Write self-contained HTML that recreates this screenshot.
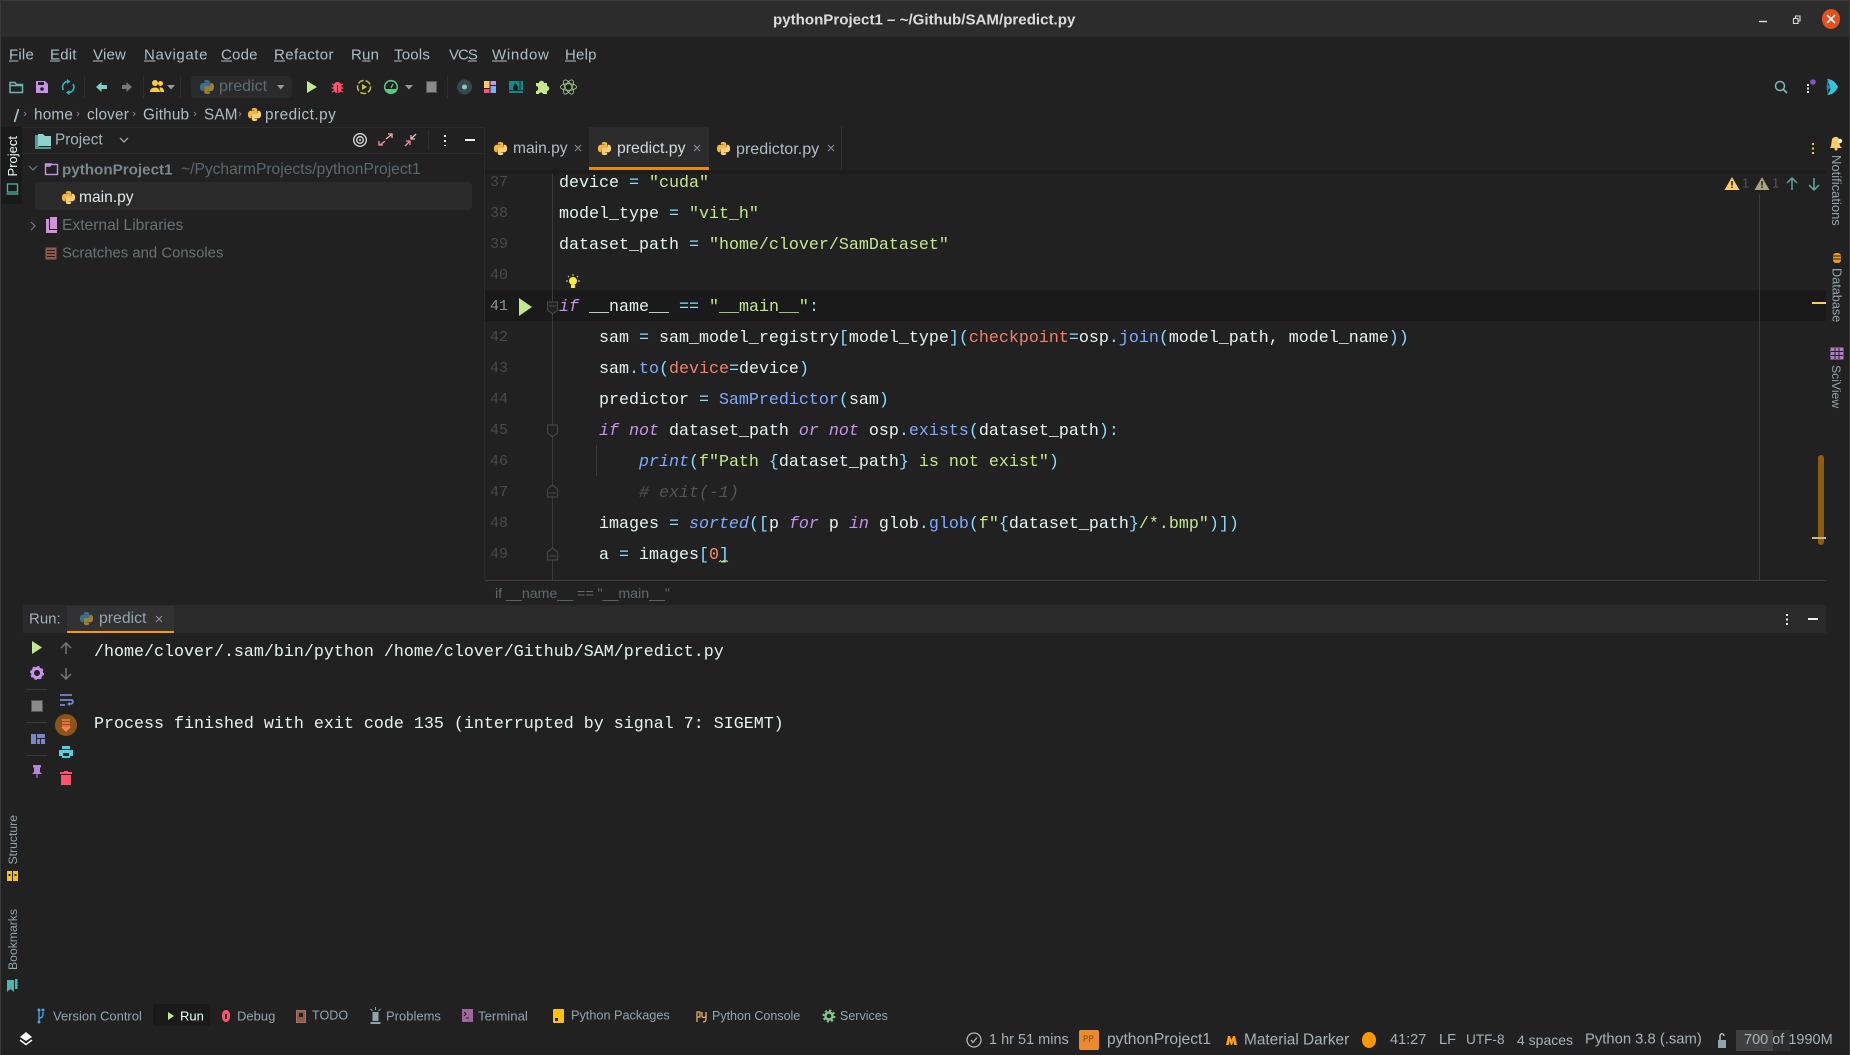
<!DOCTYPE html>
<html><head><meta charset="utf-8"><title>pythonProject1</title>
<style>
html,body{margin:0;padding:0;background:#212121;width:1850px;height:1055px;overflow:hidden}
body{position:relative;font-family:"Liberation Sans",sans-serif;color:#b0bec5;font-size:15px}
.t{position:absolute;white-space:pre;line-height:1;transform:translateY(-50%)}
.b{position:absolute}
.v{position:absolute;white-space:pre;line-height:1;writing-mode:vertical-rl;font-size:13px;color:#93a5ad}
.vl{transform:rotate(180deg)}
.m{font-size:15px;color:#b0bec5;letter-spacing:.2px}
.c{position:absolute;left:559px;white-space:pre;font-family:"Liberation Mono",monospace;font-size:16.67px;line-height:31px;color:#e6f4f4}
.n{position:absolute;left:490px;font-family:"Liberation Mono",monospace;font-size:15px;line-height:31px;color:#4a4a4a}
.k{color:#c792ea;font-style:italic}.s{color:#c3e88d}.f{color:#82aaff}.o{color:#89ddff}.p{color:#f0806a}.d{color:#f78c6c}.i{font-style:italic}
.tb{font-size:13px;color:#93a5ad}
.st{font-size:14.5px;color:#a4b3ba}
svg.o1{position:absolute;left:0;top:0}
</style></head><body>
<!-- title bar -->
<div class="b" style="left:0;top:0;width:1850px;height:37px;background:#2c2c2c;border-top:1px solid #3c3c3c;box-sizing:border-box"></div>
<div class="b" style="left:0;top:0;width:1px;height:1055px;background:#3a3a3a"></div>
<div class="b" style="left:1849px;top:0;width:1px;height:1055px;background:#3a3a3a"></div>
<div class="t" style="left:773px;top:20px;font-weight:bold;font-size:15.1px;color:#dcdcdc">pythonProject1 – ~/Github/SAM/predict.py</div>

<!-- menu -->
<div class="t m" style="left:9px;top:55px"><u>F</u>ile</div>
<div class="t m" style="left:50px;top:55px"><u>E</u>dit</div>
<div class="t m" style="left:93px;top:55px"><u>V</u>iew</div>
<div class="t m" style="left:144px;top:55px;letter-spacing:.6px"><u>N</u>avigate</div>
<div class="t m" style="left:221px;top:55px"><u>C</u>ode</div>
<div class="t m" style="left:274px;top:55px;letter-spacing:.4px"><u>R</u>efactor</div>
<div class="t m" style="left:351px;top:55px">R<u>u</u>n</div>
<div class="t m" style="left:394px;top:55px"><u>T</u>ools</div>
<div class="t m" style="left:449px;top:55px;letter-spacing:-1px">VC<u>S</u></div>
<div class="t m" style="left:492px;top:55px;letter-spacing:.7px"><u>W</u>indow</div>
<div class="t m" style="left:565px;top:55px"><u>H</u>elp</div>

<!-- toolbar -->
<div class="b" style="left:191px;top:76px;width:101px;height:22px;background:#2a2a2a;border-radius:4px"></div>
<div class="t" style="left:219px;top:87px;font-size:16px;color:#616c71">predict</div>

<!-- breadcrumb -->
<div class="t m" style="left:34px;top:115px;font-size:15.3px">home</div>
<div class="t m" style="left:87px;top:115px;font-size:15.3px">clover</div>
<div class="t m" style="left:143px;top:115px;font-size:15.3px">Github</div>
<div class="t m" style="left:204px;top:115px;font-size:15.3px">SAM</div>
<div class="t m" style="left:265px;top:115px;font-size:15.3px;letter-spacing:.5px">predict.py</div>

<!-- project tool strip -->
<div class="b" style="left:1px;top:127px;width:21px;height:77px;background:#1a1a1a"></div>
<div class="v vl" style="left:6px;top:136px;color:#eeffff;font-size:13px">Project</div>
<div class="v vl" style="left:7px;top:815px;font-size:12.2px">Structure</div>
<div class="v vl" style="left:7px;top:909px;font-size:12.2px">Bookmarks</div>

<!-- project panel -->
<div class="b" style="left:22px;top:127px;width:462px;height:1px;background:#2a2a2a"></div>
<div class="b" style="left:22px;top:153px;width:462px;height:1px;background:#2a2a2a"></div>
<div class="b" style="left:484px;top:127px;width:1px;height:453px;background:#2a2a2a"></div>
<div class="t" style="left:55px;top:140px;font-size:15.3px;color:#a4b3ba">Project</div>
<div class="b" style="left:35px;top:182px;width:437px;height:28px;background:#2a2a2a;border-radius:4px"></div>
<div class="t" style="left:62px;top:170px;font-weight:bold;font-size:15.2px;color:#7c878c">pythonProject1</div>
<div class="t" style="left:181px;top:170px;font-size:15.6px;color:#5d676b">~/PycharmProjects/pythonProject1</div>
<div class="t" style="left:79px;top:198px;font-size:15.6px;color:#dfe8ec">main.py</div>
<div class="t" style="left:62px;top:226px;font-size:15.6px;color:#687377">External Libraries</div>
<div class="t" style="left:62px;top:254px;font-size:14.9px;color:#687377">Scratches and Consoles</div>

<!-- editor tabs -->
<div class="b" style="left:589px;top:127px;width:120px;height:43px;background:#2c2c2c"></div>
<div class="b" style="left:589px;top:167px;width:120px;height:3px;background:#e5890a"></div>
<div class="b" style="left:485px;top:170px;width:1341px;height:4px;background:#1c1c1c"></div>
<div class="t" style="left:513px;top:149px;font-size:15.6px;color:#b0bec5">main.py</div>
<div class="t" style="left:617px;top:149px;font-size:15.8px;color:#d0dade">predict.py</div>
<div class="t" style="left:736px;top:149px;font-size:16.1px;color:#b0bec5">predictor.py</div>

<!-- editor -->
<div class="b" style="left:485px;top:290px;width:1341px;height:31px;background:#1a1a1a"></div>
<div class="b" style="left:552px;top:174px;width:1px;height:406px;background:#3a3a3a"></div>
<div class="b" style="left:1759px;top:194px;width:1px;height:386px;background:#3a3a3a"></div>
<div class="b" style="left:596px;top:445px;width:1px;height:31px;background:#3a3a3a"></div>
<div class="b" style="left:485px;top:580px;width:1341px;height:1px;background:#3d3d3d"></div>

<div class="n" style="top:167px">37</div><div class="n" style="top:198px">38</div><div class="n" style="top:229px">39</div><div class="n" style="top:260px">40</div>
<div class="n" style="top:291px;color:#8a9296">41</div><div class="n" style="top:322px">42</div><div class="n" style="top:353px">43</div><div class="n" style="top:384px">44</div>
<div class="n" style="top:415px">45</div><div class="n" style="top:446px">46</div><div class="n" style="top:477px">47</div><div class="n" style="top:508px">48</div><div class="n" style="top:539px">49</div>

<div class="c" style="top:168px">device <span class="o">=</span> <span class="s">"cuda"</span></div>
<div class="c" style="top:199px">model_type <span class="o">=</span> <span class="s">"vit_h"</span></div>
<div class="c" style="top:230px">dataset_path <span class="o">=</span> <span class="s">"home/clover/SamDataset"</span></div>
<div class="c" style="top:292px"><span class="k">if</span> __name__ <span class="o">==</span> <span class="s">"__main__"</span><span class="o">:</span></div>
<div class="c" style="top:323px">    sam <span class="o">=</span> sam_model_registry<span class="o">[</span>model_type<span class="o">](</span><span class="p">checkpoint</span><span class="o">=</span>osp<span class="o">.</span><span class="f">join</span><span class="o">(</span>model_path, model_name<span class="o">))</span></div>
<div class="c" style="top:354px">    sam<span class="o">.</span><span class="f">to</span><span class="o">(</span><span class="p">device</span><span class="o">=</span>device<span class="o">)</span></div>
<div class="c" style="top:385px">    predictor <span class="o">=</span> <span class="f">SamPredictor</span><span class="o">(</span>sam<span class="o">)</span></div>
<div class="c" style="top:416px">    <span class="k">if</span> <span class="k">not</span> dataset_path <span class="k">or</span> <span class="k">not</span> osp<span class="o">.</span><span class="f">exists</span><span class="o">(</span>dataset_path<span class="o">):</span></div>
<div class="c" style="top:447px">        <span class="f i">print</span><span class="o">(</span><span class="s">f"Path </span><span class="o">{</span>dataset_path<span class="o">}</span><span class="s"> is not exist"</span><span class="o">)</span></div>
<div class="c" style="top:478px">        <span class="i" style="color:#545454"># exit(-1)</span></div>
<div class="c" style="top:509px">    images <span class="o">=</span> <span class="f i">sorted</span><span class="o">([</span>p <span class="k">for</span> p <span class="k">in</span> glob<span class="o">.</span><span class="f">glob</span><span class="o">(</span><span class="s">f"</span><span class="o">{</span>dataset_path<span class="o">}</span><span class="s">/*.bmp"</span><span class="o">)])</span></div>
<div class="c" style="top:540px">    a <span class="o">=</span> images<span class="o">[</span><span class="d">0</span><span class="o">]</span></div>
<div class="t" style="left:495px;top:594px;font-size:14.2px;color:#5f6a6f">if __name__ == "__main__"</div>
<div class="t" style="left:1742px;top:183px;font-size:13px;color:#555">1</div>
<div class="t" style="left:1772px;top:183px;font-size:13px;color:#555">1</div>

<!-- scrollbar -->
<div class="b" style="left:1818px;top:455px;width:6px;height:90px;background:#8f5a12;border-radius:3px"></div>
<div class="b" style="left:1812px;top:537px;width:14px;height:2px;background:#c9b884"></div>
<div class="b" style="left:1812px;top:302px;width:14px;height:2px;background:#ffcb6b"></div>

<!-- right strip -->
<div class="v" style="left:1830px;top:155px">Notifications</div>
<div class="v" style="left:1830px;top:268px;font-size:12.7px">Database</div>
<div class="v" style="left:1830px;top:365px;font-size:12.2px">SciView</div>

<!-- run panel -->
<div class="b" style="left:23px;top:605px;width:1803px;height:28px;background:#2a2a2a"></div>
<div class="b" style="left:67px;top:606px;width:107px;height:27px;background:#323232"></div>
<div class="b" style="left:67px;top:631px;width:107px;height:2px;background:#ff9800"></div>
<div class="t" style="left:29px;top:619px;font-size:15px;color:#9fb0b8">Run:</div>
<div class="t" style="left:99px;top:619px;font-size:15.8px;color:#93a5ad">predict</div>
<div class="c" style="left:94px;top:637px">/home/clover/.sam/bin/python /home/clover/Github/SAM/predict.py</div>
<div class="c" style="left:94px;top:709px">Process finished with exit code 135 (interrupted by signal 7: SIGEMT)</div>

<!-- bottom tool bar -->
<div class="b" style="left:153px;top:1004px;width:57px;height:22px;background:#1a1a1a"></div>
<div class="t tb" style="left:53px;top:1016px">Version Control</div>
<div class="t tb" style="left:180px;top:1016px;color:#eeffff">Run</div>
<div class="t tb" style="left:237px;top:1016px">Debug</div>
<div class="t tb" style="left:312px;top:1016px;font-size:12.6px">TODO</div>
<div class="t tb" style="left:386px;top:1016px">Problems</div>
<div class="t tb" style="left:478px;top:1016px;font-size:13.2px">Terminal</div>
<div class="t tb" style="left:571px;top:1016px;font-size:12.7px">Python Packages</div>
<div class="t tb" style="left:712px;top:1016px;font-size:12.5px">Python Console</div>
<div class="t tb" style="left:840px;top:1016px;font-size:12.5px">Services</div>

<!-- status bar -->
<div class="b" style="left:1736px;top:1030px;width:37px;height:21px;background:#404040"></div>
<div class="b" style="left:1773px;top:1030px;width:18px;height:21px;background:#2c2c2c"></div>
<div class="t st" style="left:989px;top:1040px">1 hr 51 mins</div>
<div class="t st" style="left:1107px;top:1040px;font-size:15.6px">pythonProject1</div>
<div class="t st" style="left:1244px;top:1040px;font-size:15.4px">Material Darker</div>
<div class="t st" style="left:1390px;top:1040px">41:27</div>
<div class="t st" style="left:1439px;top:1040px">LF</div>
<div class="t st" style="left:1466px;top:1040px;font-size:13.6px">UTF-8</div>
<div class="t st" style="left:1517px;top:1040px;font-size:14px">4 spaces</div>
<div class="t st" style="left:1585px;top:1040px;font-size:14.8px">Python 3.8 (.sam)</div>
<div class="t st" style="left:1744px;top:1040px">700 of 1990M</div>
<div class="b" style="left:1079px;top:1030px;width:20px;height:20px;background:#e98b2e;border-radius:2px"></div>
<div class="t" style="left:1083px;top:1040px;font-size:9px;color:#8a4a10;font-family:'Liberation Mono',monospace">PP</div>

<!-- icons -->
<svg class="o1" width="1850" height="1055" viewBox="0 0 1850 1055" fill="none">
<defs>
<symbol id="pm" viewBox="0 0 16 16"><path fill="#f5b545" d="M7.900 1C5 1 5.200 2.300 5.200 2.300v1.300h2.800v.4H4C2.500 4 1 5 1 8s1.300 4 2.600 4h1.200v-1.700S4.700 8.600 6.400 8.600h2.800s1.600 0 1.600-1.600V2.700S11 1 7.900 1z"/><path fill="#ffd27a" d="M8.100 15c2.900 0 2.700-1.300 2.700-1.300v-1.300H8v-.4h4c1.500 0 3-1 3-4s-1.300-4-2.600-4h-1.200v1.700s.1 1.700-1.600 1.700H6.800s-1.600 0-1.600 1.600v4.300S5 15 8.100 15z"/></symbol>
<symbol id="pb" viewBox="0 0 16 16"><path fill="#3d6d8f" d="M7.900 1C5 1 5.200 2.300 5.200 2.300v1.300h2.800v.4H4C2.500 4 1 5 1 8s1.300 4 2.600 4h1.200v-1.700S4.700 8.600 6.400 8.600h2.800s1.600 0 1.600-1.600V2.700S11 1 7.900 1z"/><path fill="#9a8233" d="M8.100 15c2.900 0 2.700-1.300 2.700-1.300v-1.300H8v-.4h4c1.500 0 3-1 3-4s-1.300-4-2.600-4h-1.200v1.700s.1 1.700-1.600 1.700H6.800s-1.600 0-1.600 1.600v4.300S5 15 8.100 15z"/></symbol>
</defs>
<!-- window controls -->
<path stroke="#ddd" stroke-width="1.400" d="M1759 21.500h8"/>
<path stroke="#ddd" stroke-width="1.100" d="M1793.500 18.500h4.500v5h-4.500zM1795.500 18v-2h4.500v5h-2"/>
<ellipse cx="1831" cy="19" rx="9" ry="10" fill="#e5501e"/>
<path stroke="#fff" stroke-width="1.600" d="M1827 15l8 8M1835 15l-8 8"/>
<!-- toolbar icons -->
<path stroke="#6fb7b0" stroke-width="1.500" d="M10 82.500h5l1.500 2h6v8h-12.500z"/><path stroke="#6fb7b0" stroke-width="1.500" d="M10 85.500h12.500"/>
<path fill="#c792ea" d="M36 81h9l3 3v9H36z"/><rect x="38" y="82" width="6" height="3" fill="#212121"/><circle cx="42" cy="89" r="1.800" fill="#212121"/>
<path stroke="#26b7c4" stroke-width="1.600" d="M63.500 90a5.500 5.500 0 0 1 5-8.500M73 84a5.500 5.500 0 0 1-5 8.500"/><path fill="#26b7c4" d="M67 79v5l3.500-2.500zM69.500 95v-5l-3.500 2.500z"/>
<path stroke="#2e2e2e" d="M84.500 76v22M143.500 76v22M180.500 76v22M447.500 76v22"/>
<path fill="#80cbc4" d="M96 87l5.500-5v3h5.500v4h-5.500v3z"/>
<path fill="#777" d="M132 87l-5.500-5v3h-4.500v4h4.500v3z"/>
<circle cx="155" cy="83" r="3" fill="#ffcb3d"/><circle cx="160.500" cy="83.500" r="2.500" fill="#ffcb3d"/><path fill="#ffcb3d" d="M150 92c0-6 10-6 10 0zM160.500 92h3.500c0-4-2.500-5-4.500-4.500z"/>
<path fill="#999" d="M167 85h8l-4 4.500zM277 85h7.500l-3.700 4.500zM405 85h8l-4 4.500z"/>
<use href="#pb" x="199" y="79" width="16" height="16"/>
<path fill="#c3e88d" d="M307 81l10 6-10 6z"/>
<path fill="#ff5370" d="M337.500 82c3 0 4 2 4 5.500s-1.500 5.500-4 5.500-4-2-4-5.500 1-5.500 4-5.500z"/><path stroke="#ff5370" stroke-width="1.200" d="M332 84l3 1.500M343 84l-3 1.500M331.500 88h3M343.500 88h-3M332 92l3-1.500M343 92l-3-1.500"/><path stroke="#212121" stroke-width=".8" d="M337.500 85v8"/>
<circle cx="364" cy="87" r="6.500" stroke="#c0c43c" stroke-width="1.500" stroke-dasharray="6 2"/><path fill="#c0c43c" d="M362 84l5 3-5 3z"/>
<circle cx="391" cy="87" r="6.300" stroke="#5fc47a" stroke-width="1.600"/><path stroke="#5fc47a" stroke-width="1.300" d="M391 88l2-4"/><path fill="#5fc47a" d="M385 89h12l-2 4h-8z"/>
<rect x="426.500" y="81.500" width="10" height="11" fill="#8a8a8a" stroke="#555"/>
<circle cx="464.500" cy="87" r="7.500" fill="#37474f"/><circle cx="464.500" cy="87" r="2.500" fill="#80cbc4"/>
<rect x="484" y="81" width="5.500" height="7" fill="#ffcb6b"/><rect x="490.500" y="81" width="5.500" height="4" fill="#c792ea"/><rect x="484" y="89" width="5.500" height="4" fill="#ff5370"/><rect x="490.500" y="86" width="5.500" height="7" fill="#82aaff"/>
<rect x="509" y="81" width="14" height="12" fill="#0f8a85"/><path fill="#0b1f20" d="M515 83c2 2 3 3 3 5a2.500 2.500 0 0 1-5 0c0-2 1-3 2-5z"/><path stroke="#212121" d="M520 81v9M509 90.500h14"/>
<path fill="#c3e88d" d="M536 83h3c0-3 5-3 5 0h3v3c3 0 3 5 0 5v3h-4c0-2-4-2-4 0h-3v-3c3 0 3-5 0-5z"/>
<g stroke="#a6d78a" stroke-width=".8"><ellipse cx="568.500" cy="87" rx="8" ry="3.300"/><ellipse cx="568.500" cy="87" rx="8" ry="3.300" transform="rotate(60 568.500 87)"/><ellipse cx="568.500" cy="87" rx="8" ry="3.300" transform="rotate(120 568.500 87)"/></g>
<!-- right toolbar -->
<circle cx="1780" cy="86" r="4.500" stroke="#7ab7b2" stroke-width="1.500"/><path stroke="#7ab7b2" stroke-width="1.800" d="M1783.500 89.500l3.500 3.500"/>
<path stroke="#ddd" stroke-width="2" stroke-dasharray="2 1.500" d="M1808 84v10"/><circle cx="1813" cy="82" r="2.800" fill="#7e57c2"/>
<path fill="#33c5dd" d="M1827 79c6 0 9 4 11 8-2 4-5 8-11 8 2-2 4-5 3-8-1-3-2-6-3-8z"/><path fill="#1c8fa8" d="M1829 79l-1 6 3 2-3 3 1 5c-3-3-3-13 0-16z"/>
<!-- breadcrumbs chevrons -->
<path stroke="#a8c0cc" stroke-width="1.700" d="M14.500 122l4-13"/>
<path stroke="#778" d="M24 112l2 2-2 2M77 112l2 2-2 2M133 112l2 2-2 2M194 112l2 2-2 2M239 112l2 2-2 2"/>
<use href="#pm" x="247" y="107" width="15" height="15"/>
<!-- left strip -->
<rect x="7.500" y="184" width="10" height="8" stroke="#4fb3a8" stroke-width="1.300"/><path stroke="#4fb3a8" stroke-width="1.300" d="M6.500 194h12"/>
<path fill="#ffc107" d="M7 871h11v10H7z"/><path stroke="#212121" d="M12.500 871v10"/><rect x="8.500" y="874" width="2" height="2" fill="#212121"/><rect x="14.500" y="874" width="2" height="2" fill="#212121"/>
<path fill="#4db6ac" d="M7 980h7v12l-3.500-3-3.500 3zM15 979h2.500v10H15z"/>
<!-- project header -->
<path fill="#4f9d96" d="M35 135h4v12h12v2H35z"/><path fill="#8fd0ca" d="M38 134h5l2 2h6v10H38z"/>
<path stroke="#9aa" stroke-width="1.300" d="M120 138l4 4 4-4"/>
<circle cx="360" cy="140" r="6.300" stroke="#ddd" stroke-width="1.300"/><circle cx="360" cy="140" r="3.300" stroke="#ddd" stroke-width="1.300"/><circle cx="360" cy="140" r="1" fill="#ddd"/>
<path stroke="#f4b5b5" stroke-width="1.300" d="M386 139l5-4M388 134h4v4"/><path stroke="#f08fa0" stroke-width="1.300" d="M385 141l-5 4M379 141v4h4"/>
<path stroke="#f4b5b5" stroke-width="1.300" d="M411 139l5-5M411 135v4h4"/><path stroke="#f08fa0" stroke-width="1.300" d="M410 141l-5 5M406 141h4v4"/>
<path stroke="#2e2e2e" d="M428.500 130v20"/>
<path stroke="#eee" stroke-width="2" stroke-dasharray="2 3" d="M445 135v11"/>
<path stroke="#eee" stroke-width="2" d="M465 140h10"/>
<!-- tree -->
<path stroke="#778" stroke-width="1.200" d="M29 166l4 4 4-4M31 222l4 4-4 4"/>
<rect x="45.500" y="164.500" width="12" height="10" stroke="#c792ea" stroke-width="1.400"/><path stroke="#c792ea" stroke-width="1.400" d="M45 166h5l1-2h-6"/>
<use href="#pm" x="61" y="190" width="15" height="15"/>
<path fill="#ce93d8" d="M46 219h3v11h8v3H46zM50 217h7v12h-7z"/>
<rect x="45.500" y="247.500" width="11" height="12" fill="#8d5a4c" /><path stroke="#212121" d="M47 250.500h8M47 253.500h8M47 256.500h8"/>
<!-- editor tabs icons -->
<use href="#pm" x="493" y="141" width="15" height="15"/><use href="#pm" x="597" y="141" width="15" height="15"/><use href="#pm" x="716" y="141" width="15" height="15"/>
<path stroke="#889" stroke-width="1.200" d="M575 145l6 6M581 145l-6 6M694 145l6 6M700 145l-6 6M828 145l6 6M834 145l-6 6"/>
<path stroke="#333" d="M841.500 127v43"/>
<path stroke="#ffca28" stroke-width="2" stroke-dasharray="2 2.500" d="M1813 143v11"/>
<!-- right strip icons -->
<path fill="#ffcb6b" d="M1832 139c2-3 7-3 7 1l1 6 2 2h-12l1-2z"/><circle cx="1840" cy="141" r="2.200" fill="#fff5c0"/><circle cx="1836" cy="149" r="1.500" fill="#ffcb6b"/>
<rect x="1833" y="253" width="8" height="10" rx="3" fill="#f09a1c"/><path stroke="#212121" d="M1833 256h8M1833 259h8"/>
<rect x="1830.500" y="347.500" width="13" height="12" fill="#b37acb"/><path stroke="#212121" d="M1835 348v11M1839 348v11M1831 351.500h12M1831 355.500h12"/>
<!-- warning widget -->
<path fill="#ffcb6b" d="M1732 177l7.500 13h-15z"/><path stroke="#212121" stroke-width="1.500" d="M1732 181v4.500M1732 186.500v1.500"/>
<path fill="#a8a57e" d="M1762 177l7.500 13h-15z"/><path stroke="#212121" stroke-width="1.500" d="M1762 181v4.500M1762 186.500v1.500"/>
<path stroke="#5fa8a0" stroke-width="1.500" d="M1792 190v-12M1787 183l5-5 5 5M1814 178v12M1809 185l5 5 5-5"/>
<!-- gutter -->
<path fill="#c3e88d" d="M519 298l13 9-13 9z"/>
<g stroke="#4a4a4a" fill="#212121"><path d="M547.500 302h10v8l-5 4-5-4zM547.500 425h10v8l-5 4-5-4z"/><path d="M547.500 497h10v-8l-5-4-5 4zM547.500 560h10v-8l-5-4-5 4z"/><path d="M549 306h7M549 493h7M549 556h7"/></g>
<circle cx="573" cy="281" r="4" fill="#ffeb3b"/><rect x="571" y="285" width="4" height="3" fill="#ffeb3b"/><path stroke="#e8e060" d="M573 274v2M566 281h2M578 281h2M568 276l1 1M578 276l-1 1"/>
<path stroke="#c3e88d" stroke-width=".8" d="M719 562l1.500-1.500 1.500 1.500 1.500-1.500 1.500 1.500 1.500-1.500 1.500 1.500"/>
<!-- run panel icons -->
<use href="#pb" x="79" y="611" width="15" height="15"/>
<path stroke="#889" stroke-width="1.200" d="M156 616l6 6M162 616l-6 6"/>
<path stroke="#eee" stroke-width="2" stroke-dasharray="2 2.500" d="M1787 614v11"/>
<path stroke="#eee" stroke-width="2" d="M1808 619h10"/>
<path fill="#c3e88d" d="M32 641l10 6.500-10 6.500z"/>
<circle cx="37" cy="673" r="4.500" stroke="#c792ea" stroke-width="3"/><circle cx="37" cy="673" r="6" stroke="#c792ea" stroke-width="2" stroke-dasharray="2.400 2.300"/>
<path stroke="#3a3a3a" d="M27 689.500h20M27 722.500h20M27 755.500h20"/>
<rect x="31.500" y="700.500" width="11" height="11" fill="#8a8a8a" stroke="#555"/>
<path fill="#7986cb" d="M31 734h5v10h-5zM37 734h8v4h-8zM37 739h3v5h-3zM41 739h4v5h-4z"/>
<path fill="#b388d9" d="M33 765h8v2l-1 1v4l2 2H32l2-2v-4l-1-1z"/><path stroke="#8c6ab0" stroke-width="1.500" d="M37 774v4"/>
<path stroke="#777" stroke-width="1.500" d="M66 654v-11M61 648l5-5 5 5M66 668v11M61 674l5 5 5-5"/>
<path stroke="#7986cb" stroke-width="1.700" d="M60 695h12M60 700h12c2 2 1 4-3 4M60 705h5"/><path fill="#7986cb" d="M70 702v4l-3-2z"/>
<circle cx="66" cy="725" r="11" fill="#8a5518"/><path stroke="#ff7a55" stroke-width="1.500" d="M62 720h8M62 723h8M62 726h8"/><path fill="#ff7a55" d="M61 727h10l-5 5z"/>
<path fill="#4dd0e1" d="M62 746h8v3h-8zM59 750h14v6h-3v2h-8v-2h-3z"/><rect x="63" y="753" width="6" height="3" fill="#212121"/>
<path fill="#ff5370" d="M61 775h10v10h-10zM60 772h12v2H60zM64 771h4v1h-4z"/>
<!-- bottom icons -->
<path stroke="#4aa3df" stroke-width="1.400" d="M39 1011v10M39 1018c4 0 4-2 4-6"/><circle cx="39" cy="1022" r="1.500" fill="#4aa3df"/><circle cx="39" cy="1010" r="1.500" fill="#4aa3df"/><circle cx="43" cy="1010" r="1.500" fill="#4aa3df"/>
<path fill="#c3e88d" d="M168 1012l6 4-6 4z"/>
<path fill="#ff5370" d="M226 1010c3 0 4 3 4 6s-1 6-4 6-4-3-4-6 1-6 4-6z"/><rect x="225" y="1014" width="2" height="5" fill="#212121"/>
<rect x="296.500" y="1010.500" width="9" height="12" fill="#8d5a4c" stroke="#a87464"/><rect x="299" y="1013" width="4" height="4" fill="#212121"/>
<path fill="#90a4ae" d="M372.500 1012h6v9h-6zM370.500 1022h10v2h-10z"/><path stroke="#90a4ae" d="M375.500 1007v3M370.500 1009l2 2M380.500 1009l-2 2"/>
<rect x="462" y="1009" width="11" height="13" fill="#a066a0"/><path stroke="#212121" d="M464 1012l2 2-2 2M466 1018h3"/>
<rect x="553" y="1009" width="11" height="14" rx="1" fill="#ffc107"/><rect x="555" y="1018" width="3" height="3" fill="#212121"/>
<path stroke="#e0b060" stroke-width="1.300" d="M697 1022v-10h3v5h-3M702 1012v4c0 2 4 2 4 0v-4M706 1016v3c0 2-1 3-3 3"/>
<circle cx="829" cy="1016" r="3.500" stroke="#7fc48a" stroke-width="2.500"/><circle cx="829" cy="1016" r="5.500" stroke="#7fc48a" stroke-width="2" stroke-dasharray="2.200 2.100"/>
<!-- status -->
<path fill="#fff" d="M26 1032l6 5-6 4-6-4z"/><path stroke="#fff" stroke-width="1.500" d="M20 1040l6 4.500 6-4.500"/>
<circle cx="974" cy="1040" r="7" stroke="#aeb9be" stroke-width="1.300"/><path stroke="#aeb9be" stroke-width="1.300" d="M971 1040l2 2.500 4-5"/>
<path fill="#ffa000" d="M1226 1045l2-9h2l1.500 4 1.500-4h2l2 9h-3l-.5-4-1.500 4h-1l-1.500-4-.5 4z"/>
<ellipse cx="1369" cy="1040" rx="7" ry="8" fill="#ff9800"/>
<rect x="1718" y="1040" width="8" height="8" fill="#90a4ae"/><path stroke="#cfd8dc" stroke-width="1.300" d="M1720 1040v-4c0-3 4-3 4 0"/>
</svg>
</body></html>
